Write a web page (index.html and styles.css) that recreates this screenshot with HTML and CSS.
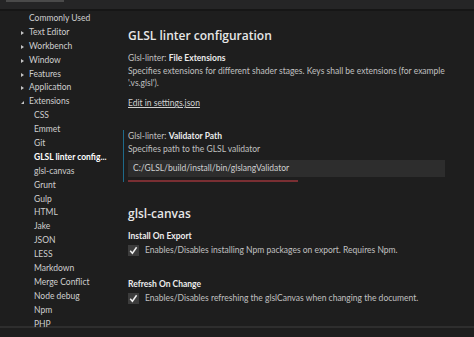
FILE: index.html
```
<!DOCTYPE html>
<html lang="en">
<head>
  <meta charset="UTF-8" />
  <title>Settings</title>
  <link rel="stylesheet" href="styles.css">
</head>
<body>
  <div class="topbar"><div class="tab"></div></div>

  <div class="main">
    <ul class="tree">
      <li class="leaf">Commonly Used</li>
      <li class="closed">Text Editor</li>
      <li class="closed">Workbench</li>
      <li class="closed">Window</li>
      <li class="closed">Features</li>
      <li class="closed">Application</li>
      <li class="open">Extensions</li>
      <li class="sub">CSS</li>
      <li class="sub">Emmet</li>
      <li class="sub">Git</li>
      <li class="sub active">GLSL linter config...</li>
      <li class="sub">glsl-canvas</li>
      <li class="sub">Grunt</li>
      <li class="sub">Gulp</li>
      <li class="sub">HTML</li>
      <li class="sub">Jake</li>
      <li class="sub">JSON</li>
      <li class="sub">LESS</li>
      <li class="sub">Markdown</li>
      <li class="sub">Merge Conflict</li>
      <li class="sub">Node debug</li>
      <li class="sub">Npm</li>
      <li class="sub">PHP</li>
    </ul>

    <div class="content">
      <h2>GLSL linter configuration</h2>

      <div class="setting">
        <div class="label">Glsl-linter: <b>File Extensions</b></div>
        <div class="desc">Specifies extensions for different shader stages. Keys shall be extensions (for example '.vs.glsl').</div>
        <a class="edit" href="#">Edit in settings.json</a>
      </div>

      <div class="setting focused">
        <div class="label">Glsl-linter: <b>Validator Path</b></div>
        <div class="desc">Specifies path to the GLSL validator</div>
        <div class="input">C:/GLSL/build/install/bin/glslangValidator</div>
        <div class="squiggle"></div>
      </div>

      <h2 class="section">glsl-canvas</h2>

      <div class="setting">
        <div class="label"><b>Install On Export</b></div>
        <div class="check-row">
          <span class="box"><svg width="11" height="11" viewBox="0 0 11 11"><path d="M2.2 5.8 L4.4 8.3 L8.6 2.3" fill="none" stroke="#f0f0f0" stroke-width="1.5"/></svg></span>
          Enables/Disables installing Npm packages on export. Requires Npm.
        </div>
      </div>

      <div class="setting gap">
        <div class="label"><b>Refresh On Change</b></div>
        <div class="check-row">
          <span class="box"><svg width="11" height="11" viewBox="0 0 11 11"><path d="M2.2 5.8 L4.4 8.3 L8.6 2.3" fill="none" stroke="#f0f0f0" stroke-width="1.5"/></svg></span>
          Enables/Disables refreshing the glslCanvas when changing the document.
        </div>
      </div>
    </div>
  </div>

  <div class="footer"></div>
</body>
</html>
```

FILE: styles.css
```
body {
  margin: 0;
  width: 474px;
  height: 337px;
  overflow: hidden;
  background-color: #1e1e1e;
  color: #cccccc;
  font-family: Lato, 'Open Sans', sans-serif;
  font-size: 8.5px;
}
.topbar {
  height: 9px;
  background-color: #252526;
  border-bottom: 2px solid #161616;
  padding-left: 6px;
}
.tab {
  width: 58px;
  height: 2px;
  background-color: #4a4a4a;
}
.main {
  display: flex;
  height: 315px;
}
.tree {
  list-style: none;
  margin: 0;
  padding: 1px 0 0 29px;
  width: 89px;
  flex-shrink: 0;
}
.tree li {
  height: 13.9px;
  line-height: 13.9px;
  white-space: nowrap;
  position: relative;
  color: #cfcfcf;
}
.tree .closed::before,
.tree .open::before {
  content: "";
  position: absolute;
  left: -8px;
  top: 5px;
  width: 0;
  height: 0;
}
.tree .closed::before {
  border-top: 2.5px solid transparent;
  border-bottom: 2.5px solid transparent;
  border-left: 3px solid #c5c5c5;
}
.tree .open::before {
  top: 6px;
  border-left: 3px solid transparent;
  border-bottom: 3px solid #c5c5c5;
}
.tree .sub { padding-left: 5px; }
.tree .active {
  color: #ffffff;
  font-weight: bold;
}
.content {
  flex: 1;
  padding: 15px 0 0 10px;
}
h2 {
  margin: 0 0 6px 0;
  font-family: 'Open Sans', sans-serif;
  font-size: 12px;
  font-weight: 600;
  line-height: 20px;
  color: #e7e7e7;
}
.section { margin-top: 22px; }
.setting { line-height: 12px; }
.label { color: #c0c0c0; }
.label b { color: #ececec; }
.desc { margin-top: 1px; color: #c0c0c0; }
.edit {
  display: inline-block;
  margin-top: 8px;
  color: #d0d0d0;
}
.focused {
  margin: 21px 0 0 -5px;
  padding-left: 4px;
  border-left: 1px solid #1e6a8a;
}
.input {
  margin-top: 5px;
  width: 312px;
  height: 17px;
  line-height: 17px;
  padding-left: 5px;
  background-color: #2d2d2d;
  color: #d0d0d0;
}
.squiggle {
  margin-top: 3px;
  width: 170px;
  height: 2px;
  background-color: #7a2f33;
}
.check-row {
  display: flex;
  align-items: center;
  gap: 6px;
  margin-top: 2px;
  color: #c0c0c0;
}
.box {
  display: flex;
  width: 11px;
  height: 11px;
  background-color: #3c3c3c;
}
.gap { margin-top: 22px; }
.footer {
  border-top: 2px solid #2e2e2e;
  height: 10px;
  background-color: #1e1e1e;
}
```
